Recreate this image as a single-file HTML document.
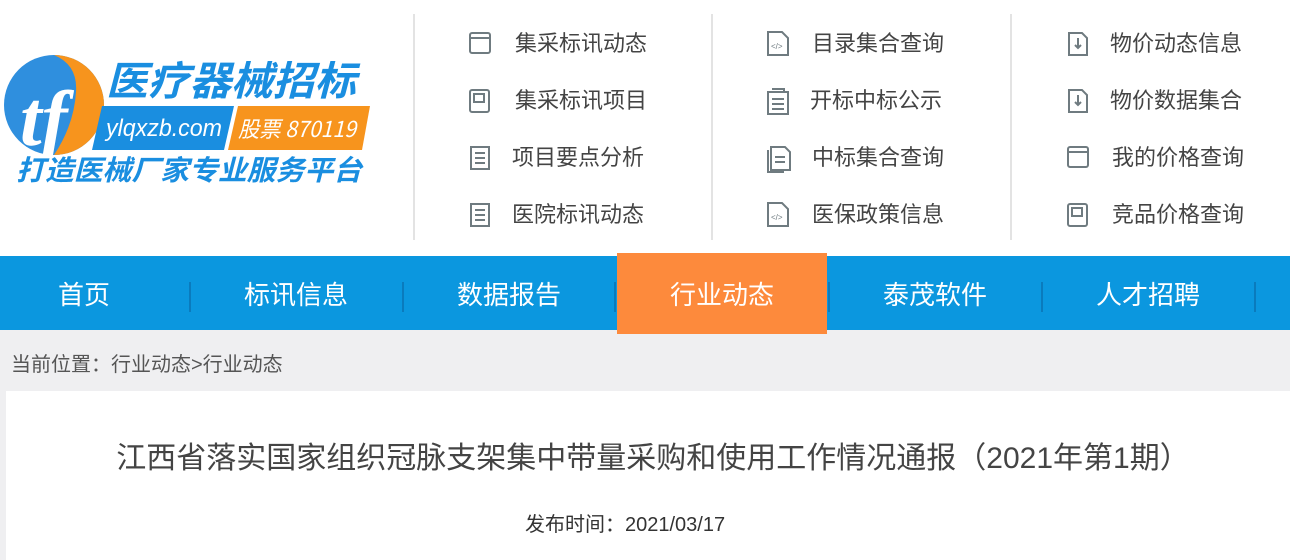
<!DOCTYPE html>
<html><head><meta charset="utf-8"><style>
*{margin:0;padding:0;box-sizing:border-box}
body{width:1290px;height:560px;overflow:hidden;background:#fff;font-family:"Liberation Sans","Noto Sans CJK SC",sans-serif;color:#444;position:relative}
.a{position:absolute}
.vd{position:absolute;top:14px;width:2px;height:226px;background:#e3e3e3}
.lk{position:absolute;font-size:22px;color:#444;white-space:nowrap;line-height:26px}
.nav{position:absolute;left:0;top:256px;width:1290px;height:74px;background:#0b97df}
.ni{position:absolute;top:256px;height:74px;line-height:78px;color:#fff;font-size:26px;text-align:center;width:212px}
.sep{position:absolute;top:282px;width:2px;height:30px;background:#0a7bbd}
</style></head><body>
<!-- logo -->
<svg class="a" style="left:0;top:50px" width="380" height="140" viewBox="0 0 380 140">
<circle cx="54" cy="55" r="50" fill="#2f8fde"/>
<path d="M54 5 A50 50 0 0 1 54 105 Q74 75 76 42 Q78 15 54 5Z" fill="#f7941d"/>
<text x="20" y="95" font-family="Liberation Serif" font-style="italic" font-size="78" fill="#fff" font-weight="bold">tf</text>
<text x="106" y="45" font-family="Noto Sans CJK SC" font-size="40" font-weight="bold" fill="#1a8ee0" font-style="italic" textLength="250" lengthAdjust="spacingAndGlyphs">医疗器械招标</text>
<polygon points="102,56 234,56 224,100 92,100" fill="#1a8ee0"/>
<polygon points="238,56 370,56 362,100 228,100" fill="#f7941d"/>
<text x="106" y="86" font-size="24" fill="#fff" font-family="Liberation Sans" font-style="italic" textLength="116" lengthAdjust="spacingAndGlyphs">ylqxzb.com</text>
<text x="238" y="87" font-size="22" fill="#fff" font-family="Noto Sans CJK SC" font-style="italic" textLength="118" lengthAdjust="spacingAndGlyphs">股票 870119</text>
<text x="16" y="130" font-size="28" fill="#1a8ee0" font-family="Noto Sans CJK SC" font-weight="bold" font-style="italic" textLength="346" lengthAdjust="spacingAndGlyphs">打造医械厂家专业服务平台</text>
</svg>
<div class="vd" style="left:413px"></div><div class="vd" style="left:711px"></div><div class="vd" style="left:1010px"></div>
<!-- icons -->
<svg class="a" style="left:0;top:0" width="1290" height="250" fill="none" stroke="#6f7b80" stroke-width="2">
<rect x="470" y="33" width="20" height="20" rx="2"/><line x1="470" y1="38" x2="490" y2="38"/>
<rect x="470" y="90" width="19" height="22" rx="2"/><rect x="474" y="94" width="10" height="8"/>
<rect x="471" y="147" width="18" height="22"/><line x1="475" y1="153" x2="485" y2="153"/><line x1="475" y1="158" x2="485" y2="158"/><line x1="475" y1="163" x2="485" y2="163"/>
<rect x="471" y="204" width="18" height="22"/><line x1="475" y1="210" x2="485" y2="210"/><line x1="475" y1="215" x2="485" y2="215"/><line x1="475" y1="220" x2="485" y2="220"/>
<path d="M768 32h14l6 6v17h-20z"/><text x="771" y="49" font-size="8" fill="#6f7b80" stroke="none">&lt;/&gt;</text>
<path d="M768 92h20v22h-20z M772 89h12v4"/><line x1="772" y1="99" x2="784" y2="99"/><line x1="772" y1="104" x2="784" y2="104"/><line x1="772" y1="109" x2="784" y2="109"/>
<path d="M771 147h14l5 5v18h-19z M768 150v22h16"/><line x1="775" y1="157" x2="785" y2="157"/><line x1="775" y1="162" x2="785" y2="162"/>
<path d="M768 203h14l6 6v17h-20z"/><text x="771" y="220" font-size="8" fill="#6f7b80" stroke="none">&lt;/&gt;</text>
<path d="M1069 33h13l5 5v17h-18z"/><path d="M1078 38v10m-3-3l3 3 3-3"/>
<path d="M1069 90h13l5 5v17h-18z"/><path d="M1078 95v10m-3-3l3 3 3-3"/>
<rect x="1068" y="147" width="20" height="20" rx="2"/><line x1="1068" y1="152" x2="1088" y2="152"/>
<rect x="1068" y="204" width="19" height="22" rx="2"/><rect x="1072" y="208" width="10" height="8"/>
</svg>
<div class="lk" style="left:515px;top:31px">集采标讯动态</div>
<div class="lk" style="left:515px;top:88px">集采标讯项目</div>
<div class="lk" style="left:512px;top:145px">项目要点分析</div>
<div class="lk" style="left:512px;top:202px">医院标讯动态</div>
<div class="lk" style="left:812px;top:31px">目录集合查询</div>
<div class="lk" style="left:810px;top:88px">开标中标公示</div>
<div class="lk" style="left:812px;top:145px">中标集合查询</div>
<div class="lk" style="left:812px;top:202px">医保政策信息</div>
<div class="lk" style="left:1110px;top:31px">物价动态信息</div>
<div class="lk" style="left:1110px;top:88px">物价数据集合</div>
<div class="lk" style="left:1112px;top:145px">我的价格查询</div>
<div class="lk" style="left:1112px;top:202px">竞品价格查询</div>
<!-- nav -->
<div class="nav"></div>
<div class="a" style="left:617px;top:253px;width:210px;height:81px;background:#fd8a3c"></div>
<div class="sep" style="left:189px"></div><div class="sep" style="left:402px"></div><div class="sep" style="left:614px"></div><div class="sep" style="left:828px"></div><div class="sep" style="left:1041px"></div><div class="sep" style="left:1254px"></div>
<div class="ni" style="left:-22px">首页</div>
<div class="ni" style="left:190px">标讯信息</div>
<div class="ni" style="left:403px">数据报告</div>
<div class="ni" style="left:616px">行业动态</div>
<div class="ni" style="left:829px">泰茂软件</div>
<div class="ni" style="left:1042px">人才招聘</div>
<!-- breadcrumb -->
<div class="a" style="left:0;top:334px;width:1290px;height:57px;background:#efeff1"></div>
<div class="a" style="left:0;top:330px;width:617px;height:4px;background:#efeff1"></div>
<div class="a" style="left:827px;top:330px;width:463px;height:4px;background:#efeff1"></div>
<div class="a" style="left:11px;top:348px;font-size:20px;color:#555;white-space:nowrap">当前位置：行业动态&gt;行业动态</div>
<div class="a" style="left:0;top:391px;width:6px;height:169px;background:#efeff1"></div>
<div class="a" style="left:0;top:433px;width:1290px;text-align:center;font-size:30px;color:#444;padding-left:16px;white-space:nowrap">江西省落实国家组织冠脉支架集中带量采购和使用工作情况通报（2021年第1期）</div>
<div class="a" style="left:525px;top:508px;font-size:20px;color:#333;white-space:nowrap">发布时间：<span>2021/03/17</span></div>
</body></html>
